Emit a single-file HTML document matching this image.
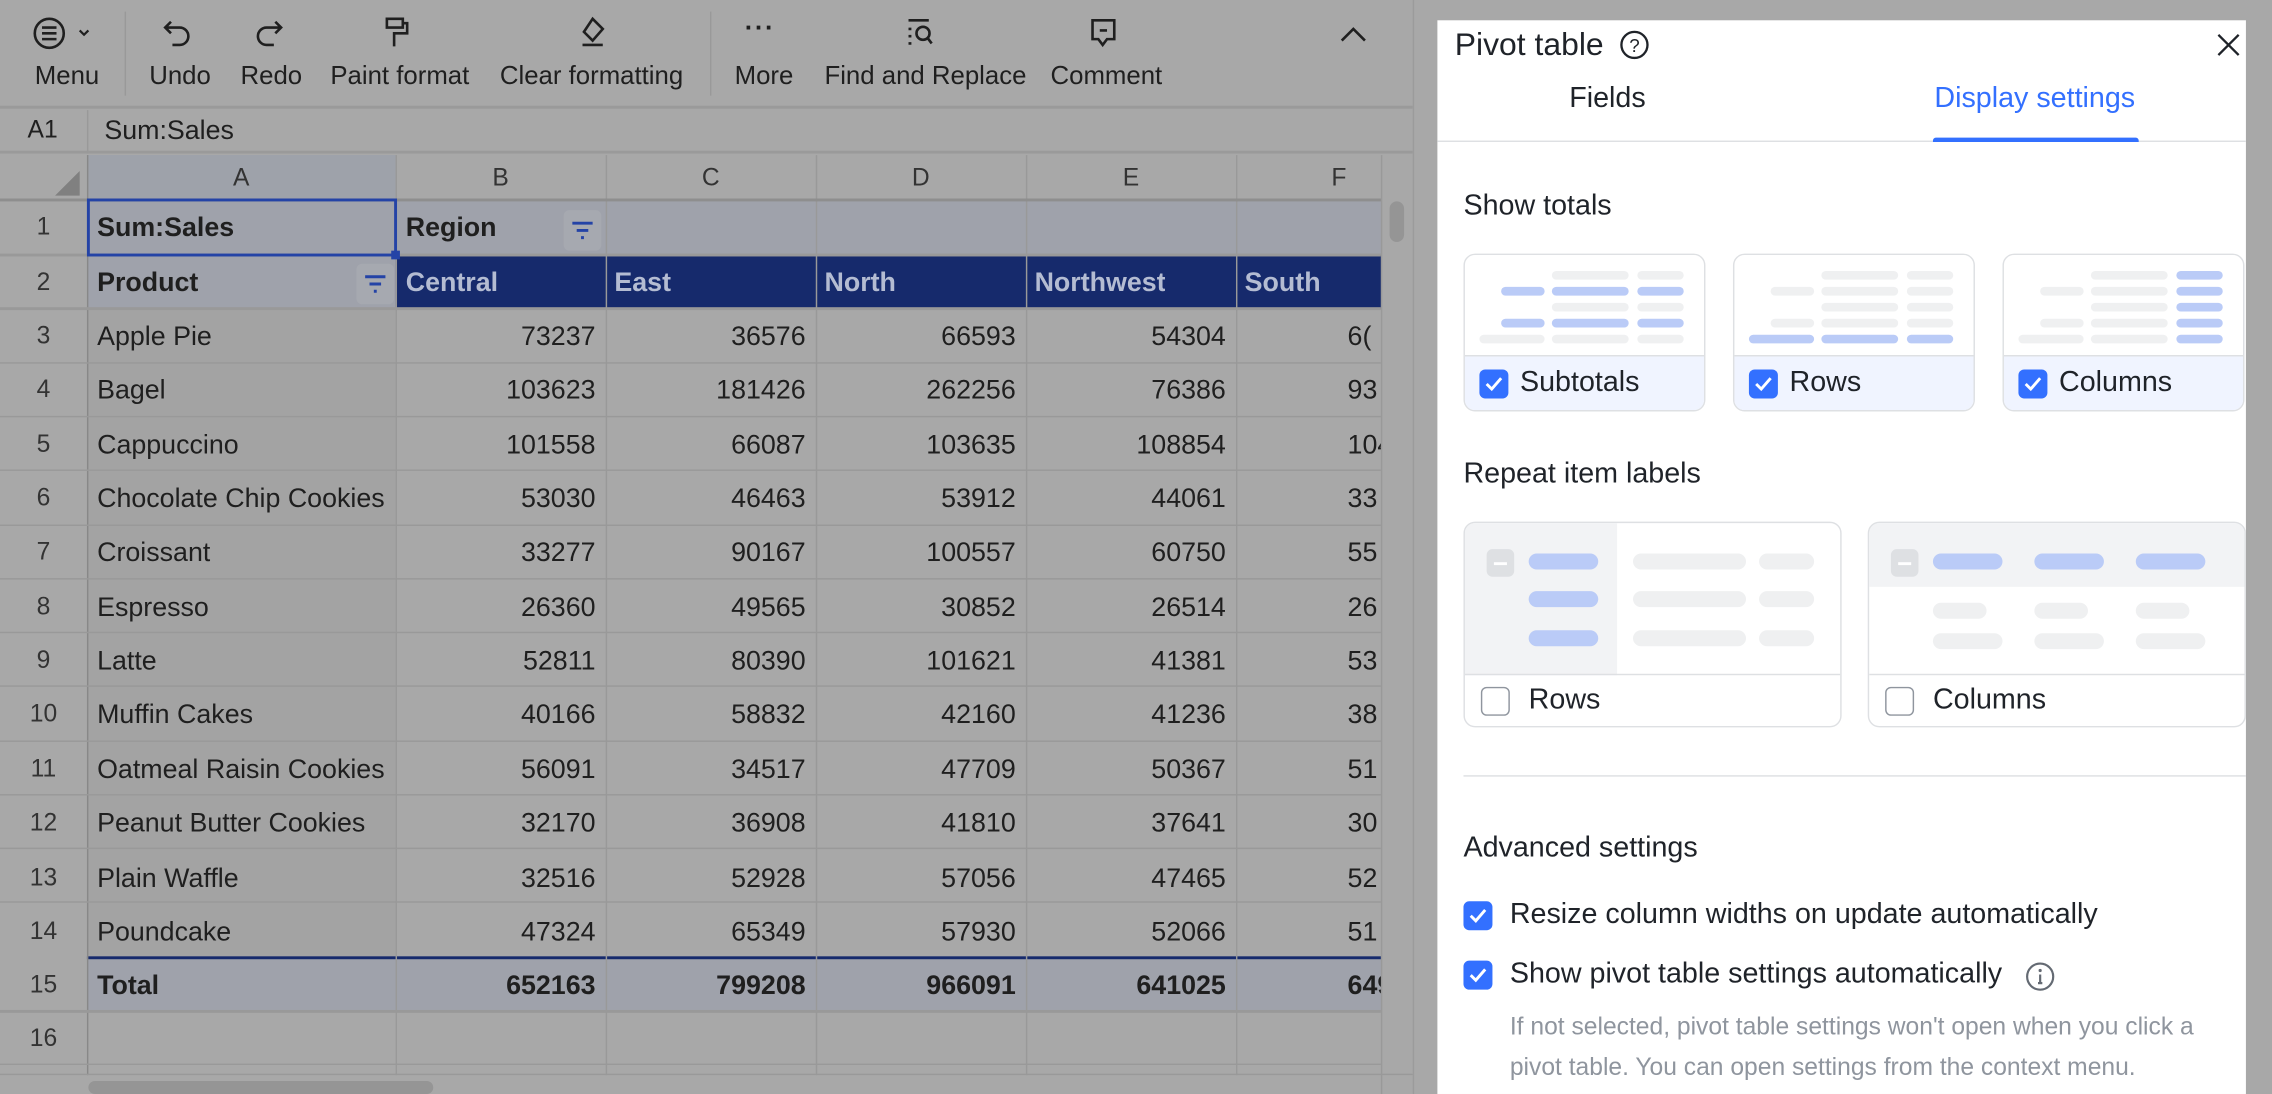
<!DOCTYPE html>
<html><head><meta charset="utf-8"><style>
*{box-sizing:border-box;margin:0;padding:0}
html,body{width:2272px;height:1094px;overflow:hidden;background:#a8a8a8;font-family:"Liberation Sans",Arial,sans-serif}
#w{position:absolute;left:0;top:0;width:1568px;height:755px;transform:scale(1.44898);transform-origin:0 0;background:#a8a8a8;color:#1f1f1f}
.a{position:absolute}
.tb{font-size:17.8px;color:#1f1f1f;top:42px;white-space:nowrap}
.ic{position:absolute;top:10px}
.g{position:absolute;background:#999}
.cell{position:absolute;font-size:18.5px;line-height:37px;white-space:nowrap;overflow:hidden}
.r{text-align:right;padding-right:7px}
.rh{position:absolute;left:0;width:60px;text-align:center;font-size:17px;color:#333;line-height:37px}
.ch{position:absolute;top:107px;height:31px;line-height:31px;text-align:center;font-size:17px;color:#333}
.p{background:#fff}
.h{font-size:19.8px;color:#1f2329;white-space:nowrap}
.bar{position:absolute;height:6px;border-radius:3px;background:#eff0f1}
.rb{position:absolute;height:11px;border-radius:6px;background:#eff0f1}
.bar.bb,.rb.bb{background:#bacbf7}
.cb{position:absolute;width:20px;height:20px;border-radius:4px;background:#3370ff}
.cb svg{position:absolute;left:3px;top:4px}
.ub{position:absolute;width:20px;height:20px;border-radius:4px;border:1.5px solid #8f959e;background:#fff}
</style></head><body><div id="w">
<!-- toolbar -->
<div class="a" style="left:0;top:0;width:975px;height:75px;background:#a8a8a8;border-bottom:2px solid #9a9a9a"></div>
<svg class="ic" style="left:22px" width="46" height="26"><circle cx="12" cy="13" r="10" fill="none" stroke="#1f1f1f" stroke-width="1.8"/><path d="M7 9h10M7 13h10M7 17h10" stroke="#1f1f1f" stroke-width="1.8"/><path d="M33 11l3 3 3-3" fill="none" stroke="#1f1f1f" stroke-width="1.5"/></svg>
<div class="a tb" style="left:24px">Menu</div>
<div class="g" style="left:86px;top:8px;width:1px;height:58px;background:#999"></div>
<svg class="ic" style="left:110px" width="26" height="26"><path d="M8 5L4 9l4 4M4 9h10a6 6 0 010 12H9" fill="none" stroke="#1f1f1f" stroke-width="1.8"/></svg>
<div class="a tb" style="left:103px">Undo</div>
<svg class="ic" style="left:172px" width="26" height="26"><path d="M18 5l4 4-4 4M22 9H12a6 6 0 000 12h5" fill="none" stroke="#1f1f1f" stroke-width="1.8"/></svg>
<div class="a tb" style="left:166px">Redo</div>
<svg class="ic" style="left:262px" width="26" height="26"><path d="M5 3h11v6H5zM16 6h3v7h-9v9" fill="none" stroke="#1f1f1f" stroke-width="1.8"/></svg>
<div class="a tb" style="left:228px">Paint format</div>
<svg class="ic" style="left:396px" width="26" height="26"><path d="M13 3l7 7-7 8-6-6zM6 21h14" fill="none" stroke="#1f1f1f" stroke-width="1.8"/></svg>
<div class="a tb" style="left:345px">Clear formatting</div>
<div class="g" style="left:490px;top:8px;width:1px;height:58px;background:#999"></div>
<div class="a" style="left:514px;top:9px;font-size:18px;letter-spacing:1px;font-weight:bold">···</div>
<div class="a tb" style="left:507px">More</div>
<svg class="ic" style="left:623px" width="26" height="26"><path d="M4 4h14M4 10h2M4 15h2M4 20h2" stroke="#1f1f1f" stroke-width="1.8"/><circle cx="14" cy="13" r="4.5" fill="none" stroke="#1f1f1f" stroke-width="1.8"/><path d="M17 16l3 4" stroke="#1f1f1f" stroke-width="1.8"/></svg>
<div class="a tb" style="left:569px">Find and Replace</div>
<svg class="ic" style="left:750px" width="26" height="26"><path d="M4 4h15v13h-5l-3 4-3-4H4z" fill="none" stroke="#1f1f1f" stroke-width="1.8"/><path d="M9 11h5" stroke="#1f1f1f" stroke-width="1.8"/></svg>
<div class="a tb" style="left:725px">Comment</div>
<svg class="ic" style="left:922px;top:14px" width="24" height="20"><path d="M4 14l8-8 8 8" fill="none" stroke="#1f1f1f" stroke-width="1.8"/></svg>
<!-- formula bar -->
<div class="a" style="left:0;top:75px;width:975px;height:31px;border-bottom:2px solid #9a9a9a"></div>
<div class="g" style="left:60px;top:76px;width:1px;height:30px"></div>
<div class="a" style="left:19px;top:80px;font-size:17px">A1</div>
<div class="a" style="left:72px;top:79px;font-size:18.5px">Sum:Sales</div>
<!-- column header -->
<div class="a" style="left:60px;top:107px;width:213px;height:31px;background:#9ea2aa"></div>
<div class="a" style="left:38px;top:118px;width:0;height:0;border-left:17px solid transparent;border-bottom:17px solid #808080"></div>
<div class="ch" style="left:60px;width:213px">A</div>
<div class="ch" style="left:273px;width:145px">B</div>
<div class="ch" style="left:418px;width:145px">C</div>
<div class="ch" style="left:563px;width:145px">D</div>
<div class="ch" style="left:708px;width:145px">E</div>
<div class="ch" style="left:853px;width:142px">F</div>
<!-- backgrounds -->
<div class="a" style="left:60px;top:213px;width:213px;height:447px;background:#a3a3a3"></div>
<div class="a" style="left:60px;top:138px;width:893px;height:38px;background:#9fa2ab"></div>
<div class="a" style="left:60px;top:176px;width:213px;height:37px;background:#9fa2ab"></div>
<div class="a" style="left:273px;top:176px;width:680px;height:37px;background:#162a6c"></div>
<div class="a" style="left:60px;top:660px;width:893px;height:37px;background:#9fa2ab;border-top:2px solid #162a6c"></div>
<!-- grid lines -->
<div class="g" style="left:60px;top:107px;width:1px;height:635px;background:#888"></div>
<div class="g" style="left:273px;top:107px;width:1px;height:635px"></div>
<div class="g" style="left:418px;top:107px;width:1px;height:635px"></div>
<div class="g" style="left:563px;top:107px;width:1px;height:635px"></div>
<div class="g" style="left:708px;top:107px;width:1px;height:635px"></div>
<div class="g" style="left:853px;top:107px;width:1px;height:635px"></div>
<div class="g" style="left:953px;top:107px;width:1px;height:648px"></div>
<div class="g" style="left:0;top:137px;width:953px;height:2px;background:#8e8e8e"></div>
<div class="g" style="left:0;top:175px;width:953px;height:2px"></div>
<div class="g" style="left:0;top:212px;width:953px;height:2px"></div>
<div class="g" style="left:0;top:250px;width:953px;height:1px"></div>
<div class="g" style="left:0;top:287px;width:953px;height:1px"></div>
<div class="g" style="left:0;top:324px;width:953px;height:1px"></div>
<div class="g" style="left:0;top:362px;width:953px;height:1px"></div>
<div class="g" style="left:0;top:399px;width:953px;height:1px"></div>
<div class="g" style="left:0;top:436px;width:953px;height:1px"></div>
<div class="g" style="left:0;top:473px;width:953px;height:1px"></div>
<div class="g" style="left:0;top:511px;width:953px;height:1px"></div>
<div class="g" style="left:0;top:548px;width:953px;height:1px"></div>
<div class="g" style="left:0;top:585px;width:953px;height:1px"></div>
<div class="g" style="left:0;top:622px;width:953px;height:1px"></div>
<div class="g" style="left:0;top:697px;width:953px;height:2px"></div>
<div class="g" style="left:0;top:734px;width:953px;height:1px"></div>
<div class="g" style="left:0;top:741px;width:975px;height:1px"></div>
<div class="a" style="left:61px;top:746px;width:238px;height:9px;border-radius:5px;background:#959595"></div>
<div class="a" style="left:959px;top:139px;width:10px;height:28px;border-radius:5px;background:#959595"></div>
<div class="g" style="left:975px;top:0;width:1px;height:755px;background:#9b9b9b"></div>
<!-- selection -->
<div class="a" style="left:60px;top:137px;width:214px;height:40px;border:2px solid #2443a6"></div>
<div class="a" style="left:270px;top:173px;width:6px;height:6px;background:#2443a6"></div>
<!-- filter icons -->
<div class="a" style="left:389px;top:145px;width:26px;height:28px;border-radius:4px;background:#a6a9b0"></div>
<svg class="a" style="left:393px;top:151px" width="18" height="16"><path d="M2 3h14M5 8h8M8 13h2" stroke="#2443a6" stroke-width="2"/></svg>
<div class="a" style="left:246px;top:182px;width:26px;height:28px;border-radius:4px;background:#a6a9b0"></div>
<svg class="a" style="left:250px;top:188px" width="18" height="16"><path d="M2 3h14M5 8h8M8 13h2" stroke="#2443a6" stroke-width="2"/></svg>
<div id="rows"></div>
<div class="rh" style="top:138px">1</div>
<div class="cell" style="left:67px;top:138px;font-weight:bold">Sum:Sales</div>
<div class="cell" style="left:280px;top:138px;font-weight:bold">Region</div>
<div class="rh" style="top:176px">2</div>
<div class="cell" style="left:67px;top:176px;font-weight:bold">Product</div>
<div class="cell" style="left:280px;top:176px;font-weight:bold;color:#b4bcd2">Central</div>
<div class="cell" style="left:424px;top:176px;font-weight:bold;color:#b4bcd2">East</div>
<div class="cell" style="left:569px;top:176px;font-weight:bold;color:#b4bcd2">North</div>
<div class="cell" style="left:714px;top:176px;font-weight:bold;color:#b4bcd2">Northwest</div>
<div class="cell" style="left:859px;top:176px;font-weight:bold;color:#b4bcd2">South</div>
<script>
var d=[["Apple Pie",73237,36576,66593,54304,"6("],["Bagel",103623,181426,262256,76386,"93"],["Cappuccino",101558,66087,103635,108854,"104"],["Chocolate Chip Cookies",53030,46463,53912,44061,"33"],["Croissant",33277,90167,100557,60750,"55"],["Espresso",26360,49565,30852,26514,"26"],["Latte",52811,80390,101621,41381,"53"],["Muffin Cakes",40166,58832,42160,41236,"38"],["Oatmeal Raisin Cookies",56091,34517,47709,50367,"51"],["Peanut Butter Cookies",32170,36908,41810,37641,"30"],["Plain Waffle",32516,52928,57056,47465,"52"],["Poundcake",47324,65349,57930,52066,"51"],["Total",652163,799208,966091,641025,"649"]];
var h="",L=[273,418,563,708,853];
for(var i=0;i<d.length;i++){var t=213+i*37.35;var b=i==12?"font-weight:bold;":"";
h+='<div class="rh" style="top:'+t+'px">'+(i+3)+'</div><div class="cell" style="left:67px;top:'+t+'px;'+b+'">'+d[i][0]+'</div>';
for(var j=1;j<5;j++)h+='<div class="cell r" style="left:'+L[j-1]+'px;width:145px;top:'+t+'px;'+b+'">'+d[i][j]+'</div>';
h+='<div class="cell" style="left:930px;width:23px;top:'+t+'px;'+b+'">'+d[i][5]+'</div>';}
h+='<div class="rh" style="top:698px">16</div>';
document.getElementById("rows").innerHTML=h;
</script>
<!-- panel -->
<div class="a p" style="left:992px;top:14px;width:558px;height:741px"></div>
<div class="a h" style="left:1004px;top:18px;font-size:22px">Pivot table</div>
<svg class="a" style="left:1117px;top:20px" width="22" height="22"><circle cx="11" cy="11" r="9" fill="none" stroke="#1f2329" stroke-width="1.6"/><text x="11" y="16" font-size="13" text-anchor="middle" font-family="Liberation Sans" fill="#1f2329">?</text></svg>
<svg class="a" style="left:1529px;top:22px" width="18" height="18"><path d="M2 2l14 14M16 2L2 16" stroke="#1f2329" stroke-width="1.6"/></svg>
<div class="a h" style="left:1083px;top:57px">Fields</div>
<div class="a" style="left:1335px;top:57px;font-size:19.8px;color:#3370ff;white-space:nowrap">Display settings</div>
<div class="a" style="left:992px;top:97px;width:558px;height:1px;background:#dee0e3"></div>
<div class="a" style="left:1334px;top:95px;width:142px;height:3px;border-radius:2px 2px 0 0;background:#3370ff"></div>
<div class="a h" style="left:1010px;top:131px">Show totals</div>
<div id="tc"></div>
<script>
var c="",X=[1010,1196,1382],N=["Subtotals","Rows","Columns"];
var P=[
 [[0,0,0,0],[1,1,1,1],[0,0,0,0],[1,1,1,1],[2,0,0,0]],
 [[0,0,0,0],[1,0,0,0],[0,0,0,0],[1,0,0,0],[2,1,1,1]],
 [[0,0,0,1],[1,0,0,1],[0,0,0,1],[1,0,0,1],[2,0,0,1]]];
var Y=[12,23,34,45,56];
for(var k=0;k<3;k++){var x=X[k];
c+='<div class="a" style="left:'+x+'px;top:175px;width:167px;height:109px;border:1px solid #dee0e3;border-radius:8px;overflow:hidden;background:#fff"><div class="a" style="left:0;top:69px;width:167px;height:40px;background:#f0f4ff;border-top:1px solid #dee0e3"></div></div>';
for(var r=0;r<5;r++){var p=P[k][r],y=175+Y[r];
if(p[0])c+='<div class="bar'+(p[1]?' bb':'')+'" style="left:'+(x+(p[0]==1?26:11))+'px;top:'+y+'px;width:'+(p[0]==1?30:45)+'px"></div>';
c+='<div class="bar'+(p[2]?' bb':'')+'" style="left:'+(x+61)+'px;top:'+y+'px;width:53px"></div>';
c+='<div class="bar'+(p[3]?' bb':'')+'" style="left:'+(x+120)+'px;top:'+y+'px;width:32px"></div>';}
c+='<div class="cb" style="left:'+(x+11)+'px;top:255px"><svg width="14" height="12"><path d="M2 6l3.5 3.5L12 2" fill="none" stroke="#fff" stroke-width="2"/></svg></div>';
c+='<div class="a h" style="left:'+(x+39)+'px;top:253px">'+N[k]+'</div>';}
document.getElementById("tc").innerHTML=c;
</script>
<div class="a h" style="left:1010px;top:316px">Repeat item labels</div>
<div class="a" style="left:1010px;top:360px;width:261px;height:142px;border:1px solid #dee0e3;border-radius:8px;overflow:hidden">
 <div class="a" style="left:0;top:0;width:105px;height:105px;background:#f2f3f5"></div>
 <div class="a" style="left:0;top:104px;width:261px;height:1px;background:#dee0e3"></div>
 <div class="a" style="left:15px;top:18px;width:19px;height:19px;border-radius:4px;background:#dee0e3"></div>
 <div class="a" style="left:20px;top:27px;width:9px;height:2px;background:#fff"></div>
 <div class="rb bb" style="left:44px;top:21px;width:48px"></div>
 <div class="rb bb" style="left:44px;top:47px;width:48px"></div>
 <div class="rb bb" style="left:44px;top:74px;width:48px"></div>
 <div class="rb" style="left:116px;top:21px;width:78px"></div>
 <div class="rb" style="left:203px;top:21px;width:38px"></div>
 <div class="rb" style="left:116px;top:47px;width:78px"></div>
 <div class="rb" style="left:203px;top:47px;width:38px"></div>
 <div class="rb" style="left:116px;top:74px;width:78px"></div>
 <div class="rb" style="left:203px;top:74px;width:38px"></div>
 <div class="ub" style="left:11px;top:113px"></div>
 <div class="a h" style="left:44px;top:111px">Rows</div>
</div>
<div class="a" style="left:1289px;top:360px;width:261px;height:142px;border:1px solid #dee0e3;border-radius:8px;overflow:hidden">
 <div class="a" style="left:0;top:0;width:261px;height:44px;background:#f2f3f5"></div>
 <div class="a" style="left:0;top:104px;width:261px;height:1px;background:#dee0e3"></div>
 <div class="a" style="left:15px;top:18px;width:19px;height:19px;border-radius:4px;background:#dee0e3"></div>
 <div class="a" style="left:20px;top:27px;width:9px;height:2px;background:#fff"></div>
 <div class="rb bb" style="left:44px;top:21px;width:48px"></div>
 <div class="rb bb" style="left:114px;top:21px;width:48px"></div>
 <div class="rb bb" style="left:184px;top:21px;width:48px"></div>
 <div class="rb" style="left:44px;top:55px;width:37px"></div>
 <div class="rb" style="left:114px;top:55px;width:37px"></div>
 <div class="rb" style="left:184px;top:55px;width:37px"></div>
 <div class="rb" style="left:44px;top:76px;width:48px"></div>
 <div class="rb" style="left:114px;top:76px;width:48px"></div>
 <div class="rb" style="left:184px;top:76px;width:48px"></div>
 <div class="ub" style="left:11px;top:113px"></div>
 <div class="a h" style="left:44px;top:111px">Columns</div>
</div>
<div class="a" style="left:1010px;top:535px;width:540px;height:1px;background:#dee0e3"></div>
<div class="a h" style="left:1010px;top:574px">Advanced settings</div>
<div class="cb" style="left:1010px;top:622px"><svg width="14" height="12"><path d="M2 6l3.5 3.5L12 2" fill="none" stroke="#fff" stroke-width="2"/></svg></div>
<div class="a h" style="left:1042px;top:620px">Resize column widths on update automatically</div>
<div class="cb" style="left:1010px;top:663px"><svg width="14" height="12"><path d="M2 6l3.5 3.5L12 2" fill="none" stroke="#fff" stroke-width="2"/></svg></div>
<div class="a h" style="left:1042px;top:661px">Show pivot table settings automatically</div>
<svg class="a" style="left:1397px;top:663px" width="22" height="22"><circle cx="11" cy="11" r="9" fill="none" stroke="#646a73" stroke-width="1.5"/><path d="M11 9.5v6M9.5 15.5h3" stroke="#646a73" stroke-width="1.5"/><circle cx="11" cy="6.8" r="1.1" fill="#646a73"/></svg>
<div class="a" style="left:1042px;top:695px;width:500px;font-size:17px;line-height:28px;color:#8f959e">If not selected, pivot table settings won't open when you click a pivot table. You can open settings from the context menu.</div>
</div></body></html>
